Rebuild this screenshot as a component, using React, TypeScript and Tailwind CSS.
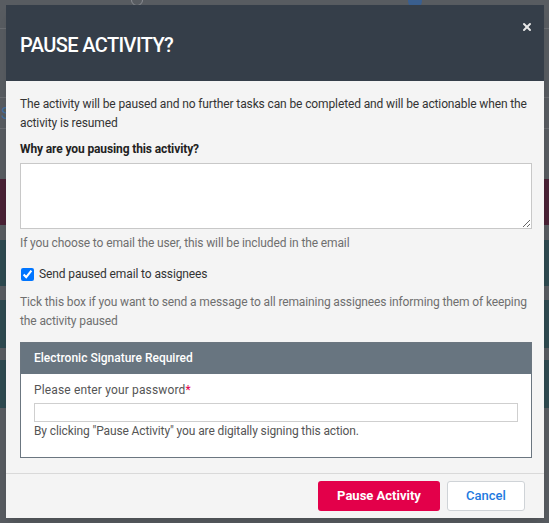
import { X } from 'lucide-react';

function Backdrop() {
    // dimmed page behind the modal, only its edges show
    return (
        <div className="h-[523px] w-[549px] bg-[#585c61] flex flex-col overflow-hidden">
            <div className="h-[14px] flex items-start">
                <div className="ml-[131px] -mt-[6px] w-[12px] h-[12px] rounded-full border border-[#8a8d92]" />
                <div className="ml-[265px] -mt-[6px] w-[14px] h-[14px] rounded-full bg-[#3a5f8f]" />
            </div>
            <div className="h-px bg-[#6a6d72] mt-[14px]" />
            <div className="h-px bg-[#6a6d72] mt-[68px]" />
            <div className="mt-[6px] text-[16px] leading-[20px] text-[#3f6f9f] pl-[1px] font-['Roboto',sans-serif]">S</div>
            <div className="h-px bg-[#6a6d72] mt-[4px]" />
            <div className="mt-[50px] h-[46px] bg-[#4a2236]" />
            <div className="mt-[15px] h-[46px] bg-[#2e4a50]" />
            <div className="mt-[14px] h-[48px] bg-[#2e4a50]" />
            <div className="mt-[12px] h-[48px] bg-[#2e4a50]" />
        </div>
    );
}

export default function App() {
    return (
        <div className="relative w-[549px] h-[523px] font-['Roboto',sans-serif]">
            <Backdrop />

            {/* Modal */}
            <div className="absolute left-[6px] top-[5px] w-[538px] h-[513px] bg-[#f4f4f4] flex flex-col shadow-lg">
                <div className="relative h-[76px] bg-[#353e49] pl-[14px] pt-[3px] flex items-center">
                    <h2 className="text-[20px] leading-[24px] font-medium text-white tracking-[-0.6px]">PAUSE ACTIVITY?</h2>
                    <button className="absolute right-[11px] top-[16px] text-[#e8e8e8]">
                        <X className="w-[12px] h-[12px]" strokeWidth={4} />
                    </button>
                </div>

                <div className="pl-[14px] pr-[12px] pt-[14px] text-[12px] leading-[19px] tracking-[-0.12px]">
                    <p className="text-[#333]">
                        The activity will be paused and no further tasks can be completed and will be actionable when the activity is resumed
                    </p>
                    <label className="block mt-[7px] font-bold text-[#222]">Why are you pausing this activity?</label>
                    <textarea className="block mt-[4px] w-full h-[66px] bg-white border border-[#c8c8c8] resize-y outline-none" />
                    <p className="mt-[5px] text-[#6f6f6f]">If you choose to email the user, this will be included in the email</p>

                    <label className="mt-[12px] flex items-center gap-[4px] text-[#333]">
                        <input type="checkbox" defaultChecked className="w-[13px] h-[13px] m-0 ml-[1px] accent-[#0075ff]" />
                        <span className="ml-[1px]">Send paused email to assignees</span>
                    </label>

                    <p className="mt-[9px] text-[#6f6f6f]">
                        Tick this box if you want to send a message to all remaining assignees informing them of keeping the activity paused
                    </p>

                    {/* Signature */}
                    <div className="mt-[11px] border border-[#6b7680] bg-white">
                        <div className="h-[31px] bg-[#687580] pl-[13px] flex items-center text-white font-medium tracking-normal">
                            Electronic Signature Required
                        </div>
                        <div className="pl-[13px] pr-[13px] pt-[7px] pb-[16px] text-[#555]">
                            <div className="tracking-[0.15px]">
                                Please enter your password<span className="text-[#e4004b]">*</span>
                            </div>
                            <input type="password" className="block mt-[3px] w-full h-[19px] bg-white border border-[#cfcfcf] outline-none" />
                            <div>By clicking "Pause Activity" you are digitally signing this action.</div>
                        </div>
                    </div>
                </div>

                {/* Footer */}
                <div className="mt-auto h-[45px] border-t border-[#d9d9d9] flex items-start justify-end gap-[7px] pr-[19px] pt-[7px]">
                    <button className="w-[122px] h-[30px] rounded-[3px] bg-[#e3004a] text-white text-[13px] font-bold">
                        Pause Activity
                    </button>
                    <button className="w-[78px] h-[30px] rounded-[3px] bg-white border border-[#cfd3d7] text-[#1d7ae0] text-[13px] font-medium">
                        Cancel
                    </button>
                </div>
            </div>
        </div>
    );
}
